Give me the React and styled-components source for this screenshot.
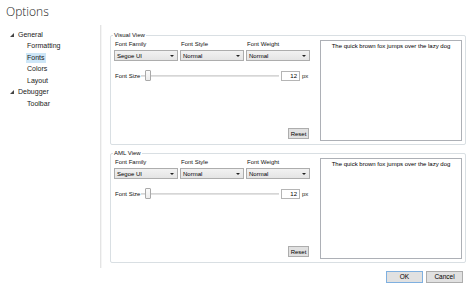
import React from "react";
import styled, { createGlobalStyle } from "styled-components";

const Global = createGlobalStyle`
  html, body { margin: 0; padding: 0; background: #fff; }
  body { font-family: "Liberation Sans", Arial, sans-serif; color: #111; }
  * { box-sizing: border-box; }
`;

const Window = styled.div`
  width: 474px;
  height: 291px;
  display: flex;
  flex-direction: column;
  overflow: hidden;
  background: #fff;
`;

const Title = styled.div`
  height: 25px;
  padding: 4px 0 0 6px;
  font-family: "Open Sans", "Liberation Sans", sans-serif;
  font-weight: 300;
  font-size: 12px;
  line-height: 16px;
  color: #222;
`;

const Main = styled.div`
  flex: 1;
  min-height: 0;
  display: flex;
`;

const Sidebar = styled.div`
  width: 101px;
  border-right: 1px solid #e4e4e4;
  box-shadow: 1px 0 0 #f5f5f5;
  padding-top: 4px;
  display: flex;
  flex-direction: column;
`;

const TreeRow = styled.div`
  height: 11.5px;
  display: flex;
  align-items: center;
  padding-left: ${(p) => (p.$level ? 26 : 10)}px;
  font-size: 7px;
  line-height: 10px;
  color: #1a1a1a;
`;

const Expander = styled.svg`
  width: 4px;
  height: 4px;
  margin-right: 3px;
  flex: none;
`;

const TreeLabel = styled.span`
  padding: 0 1px;
  background: ${(p) => (p.$selected ? "#cde6f7" : "transparent")};
`;

const Content = styled.div`
  flex: 1;
  display: flex;
  flex-direction: column;
  gap: 8px;
  padding: 10px 8px 5px 9px;
`;

const Group = styled.div`
  position: relative;
  flex: 1;
  display: flex;
  gap: 10px;
  border: 1px solid #d9dfe3;
  border-radius: 2px;
  padding: 4px 3px 3px 3px;
`;

const Legend = styled.span`
  position: absolute;
  top: -5px;
  left: 2px;
  padding: 0 1px;
  background: #fff;
  font-size: 6px;
  line-height: 8px;
  color: #111;
`;

const Controls = styled.div`
  width: 196px;
  flex: none;
  display: flex;
  flex-direction: column;
`;

const FieldGrid = styled.div`
  display: grid;
  grid-template-columns: 1fr 1fr 1fr;
  gap: 2px;
`;

const Field = styled.div`
  display: flex;
  flex-direction: column;
`;

const Label = styled.span`
  font-size: 6px;
  line-height: 8px;
  padding-left: 1px;
  color: #111;
  white-space: nowrap;
`;

const Combo = styled.div`
  margin-top: 2px;
  height: 11px;
  display: flex;
  align-items: center;
  justify-content: space-between;
  padding: 0 3px 0 2px;
  border: 1px solid #adadad;
  background: linear-gradient(#f2f2f2, #e4e4e4);
  font-size: 6px;
  color: #000;
`;

const Arrow = styled.span`
  width: 0;
  height: 0;
  border-left: 2px solid transparent;
  border-right: 2px solid transparent;
  border-top: 2px solid #222;
`;

const SizeRow = styled.div`
  margin-top: 9px;
  height: 11px;
  display: flex;
  align-items: center;
`;

const SizeLabel = styled(Label)`
  width: 27px;
  flex: none;
`;

const Slider = styled.div`
  position: relative;
  flex: 1;
  height: 11px;
  display: flex;
  align-items: center;
`;

const Track = styled.div`
  width: 100%;
  height: 2px;
  background: #e2e2e2;
  border-top: 1px solid #d6d6d6;
`;

const Thumb = styled.div`
  position: absolute;
  left: 4px;
  top: 0;
  width: 6px;
  height: 11px;
  border: 1px solid #a9a9a9;
  border-radius: 1px;
  background: linear-gradient(#fbfbfb, #ececec);
`;

const SizeInput = styled.div`
  margin-left: 2px;
  width: 19px;
  height: 10px;
  border: 1px solid #b5b5b5;
  font-size: 6px;
  line-height: 8px;
  text-align: right;
  padding-right: 2px;
  color: #000;
`;

const Unit = styled.span`
  margin-left: 2px;
  width: 8px;
  font-size: 6px;
  color: #222;
`;

const Button = styled.button`
  font-family: inherit;
  font-size: ${(p) => (p.$small ? 6 : 6.5)}px;
  color: #000;
  padding: 0;
  width: ${(p) => p.$w}px;
  height: ${(p) => p.$h}px;
  border: 1px solid ${(p) => (p.$default ? "#7fb0e0" : "#adadad")};
  background: #e1e1e1;
  line-height: 1;
  cursor: default;
`;

const ResetButton = styled(Button)`
  margin-top: auto;
  margin-bottom: 2px;
  margin-right: 1px;
  align-self: flex-end;
`;

const Preview = styled.div`
  flex: 1;
  border: 1px solid #adb0b6;
  padding-top: 1px;
  text-align: center;
  font-size: 6px;
  line-height: 8px;
  color: #000;
  white-space: nowrap;
`;

const Footer = styled.div`
  height: 23px;
  display: flex;
  justify-content: flex-end;
  align-items: flex-start;
  gap: 3px;
  padding: 3px 11px 0 0;
`;

const tree = [
  { label: "General", level: 0, expanded: true },
  { label: "Formatting", level: 1 },
  { label: "Fonts", level: 1, selected: true },
  { label: "Colors", level: 1 },
  { label: "Layout", level: 1 },
  { label: "Debugger", level: 0, expanded: true },
  { label: "Toolbar", level: 1 },
];

function FontGroup({ title }) {
  return (
    <Group>
      <Legend>{title}</Legend>
      <Controls>
        <FieldGrid>
          <Field>
            <Label>Font Family</Label>
            <Combo>Segoe UI<Arrow /></Combo>
          </Field>
          <Field>
            <Label>Font Style</Label>
            <Combo>Normal<Arrow /></Combo>
          </Field>
          <Field>
            <Label>Font Weight</Label>
            <Combo>Normal<Arrow /></Combo>
          </Field>
        </FieldGrid>
        <SizeRow>
          <SizeLabel>Font Size</SizeLabel>
          <Slider>
            <Track />
            <Thumb />
          </Slider>
          <SizeInput>12</SizeInput>
          <Unit>px</Unit>
        </SizeRow>
        <ResetButton $w={21} $h={11} $small>Reset</ResetButton>
      </Controls>
      <Preview>The quick brown fox jumps over the lazy dog</Preview>
    </Group>
  );
}

export default function App() {
  return (
    <Window>
      <Global />
      <Title>Options</Title>
      <Main>
        <Sidebar>
          {tree.map((n) => (
            <TreeRow key={n.label} $level={n.level}>
              {n.level === 0 && (
                <Expander viewBox="0 0 4 4">
                  <polygon points="4,0 4,4 0,4" fill="#444" />
                </Expander>
              )}
              <TreeLabel $selected={n.selected}>{n.label}</TreeLabel>
            </TreeRow>
          ))}
        </Sidebar>
        <Content>
          <FontGroup title="Visual View" />
          <FontGroup title="AML View" />
        </Content>
      </Main>
      <Footer>
        <Button $w={37} $h={12} $default>OK</Button>
        <Button $w={37} $h={12}>Cancel</Button>
      </Footer>
    </Window>
  );
}
